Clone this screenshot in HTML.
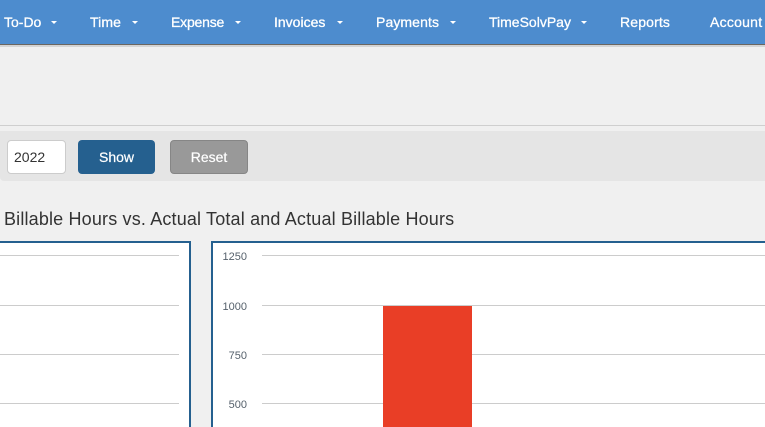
<!DOCTYPE html>
<html>
<head>
<meta charset="utf-8">
<style>
html,body{margin:0;padding:0;width:765px;height:427px;overflow:hidden;background:#f0f0f0;font-family:"Liberation Sans",sans-serif;}
#p{position:relative;width:765px;height:427px;overflow:hidden;background:#f0f0f0;}
.a{position:absolute;}
.n{position:absolute;top:14px;height:17px;line-height:17px;font-size:14px;color:#fff;white-space:nowrap;font-weight:400;-webkit-text-stroke:0.3px #fff;}
.c{position:absolute;top:21px;width:0;height:0;border-left:3px solid transparent;border-right:3px solid transparent;border-top:3px solid #fff;}
.g{position:absolute;height:1px;background:#ccc;}
.y{position:absolute;left:213px;width:34px;text-align:right;font-size:11px;line-height:13px;color:#56616c;}
</style>
</head>
<body>
<div id="p">
<div class="a" style="left:0;top:0;width:765px;height:44px;background:#4d8cce;"></div>
<div class="a" style="left:0;top:44px;width:765px;height:1px;background:#6b6660;"></div>
<div class="a" style="left:0;top:45px;width:765px;height:2px;background:#d4d4d4;"></div>

<div class="n" style="left:4px;">To-Do</div><div class="c" style="left:51px;"></div>
<div class="n" style="left:90px;letter-spacing:.1px;">Time</div><div class="c" style="left:132px;"></div>
<div class="n" style="left:171px;letter-spacing:-.2px;">Expense</div><div class="c" style="left:235px;"></div>
<div class="n" style="left:274px;">Invoices</div><div class="c" style="left:337px;"></div>
<div class="n" style="left:376px;letter-spacing:.1px;">Payments</div><div class="c" style="left:450px;"></div>
<div class="n" style="left:489px;">TimeSolvPay</div><div class="c" style="left:581px;"></div>
<div class="n" style="left:620px;letter-spacing:.15px;">Reports</div>
<div class="n" style="left:710px;letter-spacing:.25px;">Account</div>

<div class="a" style="left:0;top:125px;width:765px;height:1px;background:#cfcfcf;"></div>
<div class="a" style="left:0;top:131px;width:765px;height:50px;background:#e5e5e5;border-radius:0 0 0 4px;"></div>

<div class="a" style="left:7px;top:140px;width:57px;height:32px;background:#fff;border:1px solid #ccc;border-radius:4px;"></div>
<div class="a" style="left:14px;top:149px;font-size:14px;line-height:16px;color:#333;">2022</div>

<div class="a" style="left:78px;top:140px;width:77px;height:34px;background:#25608f;border-radius:4px;color:#fff;font-size:14px;line-height:34px;text-align:center;-webkit-text-stroke:0.2px #fff;">Show</div>
<div class="a" style="left:170px;top:140px;width:76px;height:32px;background:#999;border:1px solid #868686;border-radius:4px;color:#fff;font-size:14px;line-height:33px;text-align:center;-webkit-text-stroke:0.2px #fff;">Reset</div>

<div class="a" style="left:4px;top:208px;font-size:18px;line-height:22px;color:#333;white-space:nowrap;letter-spacing:.165px;">Billable Hours vs. Actual Total and Actual Billable Hours</div>

<div class="a" style="left:-10px;top:241px;width:197px;height:200px;background:#fff;border:2px solid #25608f;"></div>
<div class="a" style="left:211px;top:241px;width:600px;height:200px;background:#fff;border:2px solid #25608f;"></div>

<div class="g" style="left:0;top:255px;width:179px;"></div>
<div class="g" style="left:0;top:305px;width:179px;"></div>
<div class="g" style="left:0;top:354px;width:179px;"></div>
<div class="g" style="left:0;top:403px;width:179px;"></div>

<div class="g" style="left:262px;top:255px;width:503px;"></div>
<div class="g" style="left:262px;top:305px;width:503px;"></div>
<div class="g" style="left:262px;top:354px;width:503px;"></div>
<div class="g" style="left:262px;top:403px;width:503px;"></div>

<div class="y" style="top:251px;">1250</div>
<div class="y" style="top:301px;">1000</div>
<div class="y" style="top:350px;">750</div>
<div class="y" style="top:399px;">500</div>

<div class="a" style="left:383px;top:306px;width:89px;height:121px;background:#e93e26;"></div>
</div>
</body>
</html>
